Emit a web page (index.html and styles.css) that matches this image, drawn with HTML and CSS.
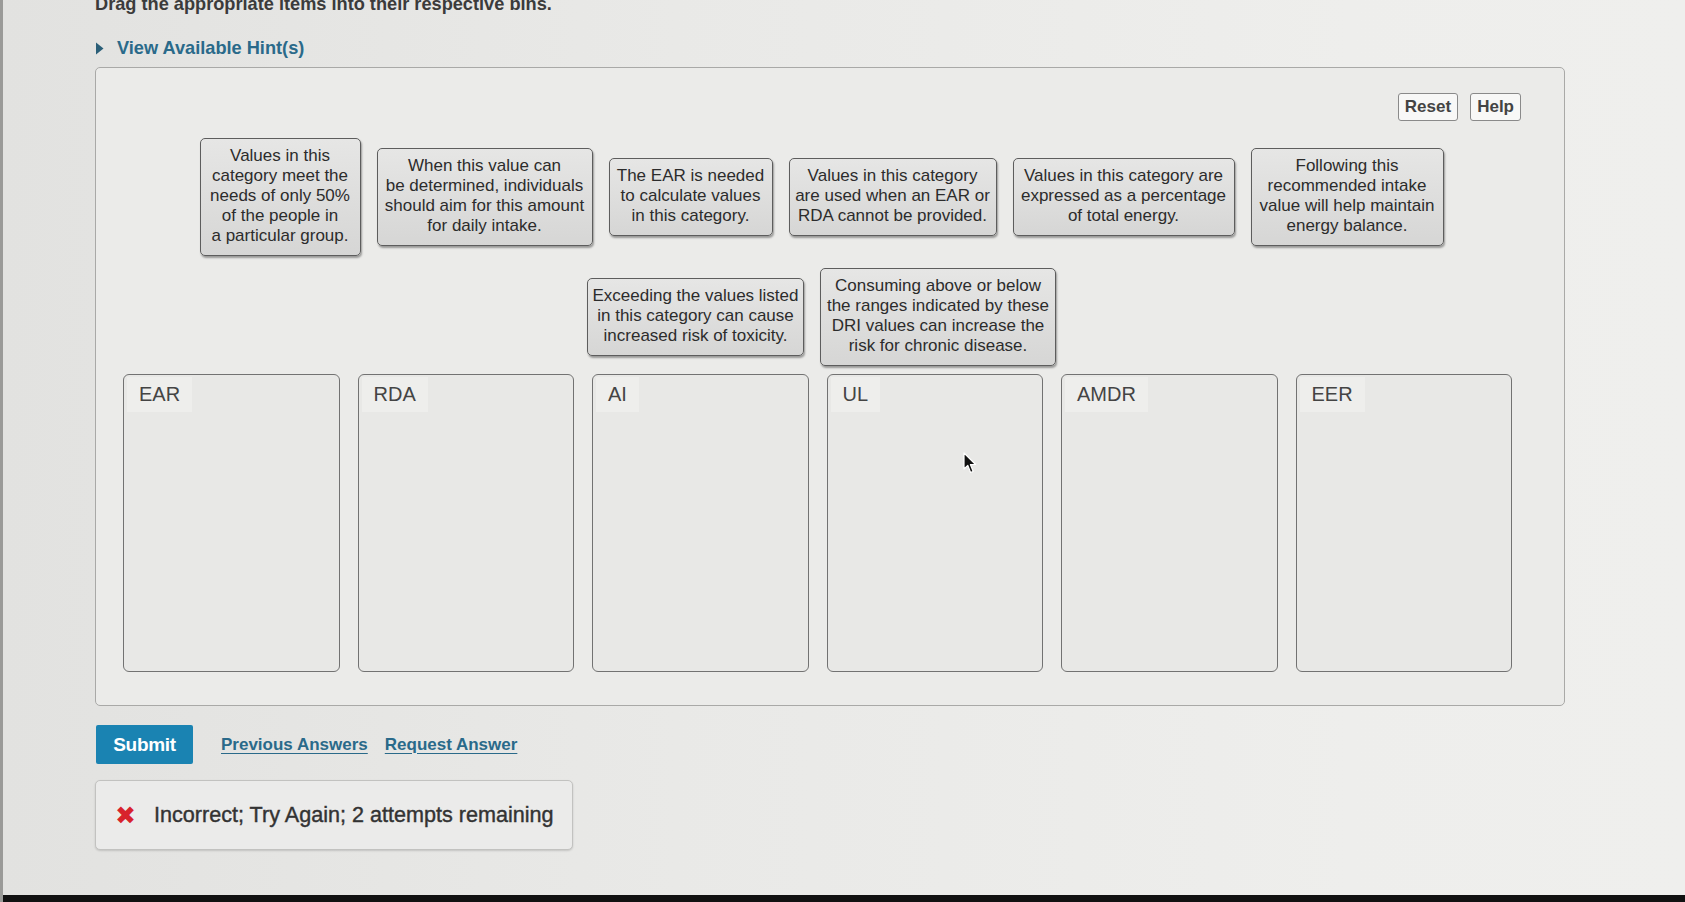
FILE: index.html
```html
<!DOCTYPE html>
<html lang="en">
<head>
<meta charset="utf-8">
<title>Drag the appropriate items into their respective bins</title>
<link rel="stylesheet" href="styles.css">
</head>
<body>
<div class="screen">
  <div class="content">
    <p class="instructions">Drag the appropriate items into their respective bins.</p>
    <div class="hint-row">
      <svg class="hint-arrow" width="9" height="13" viewBox="0 0 9 13"><path d="M1 0.5 L8.5 6.5 L1 12.5 Z" fill="#2b5f78"/></svg>
      <span class="hint-link">View Available Hint(s)</span>
    </div>

    <div class="panel">
      <div class="toolbar">
        <button class="tool-btn">Reset</button>
        <button class="tool-btn">Help</button>
      </div>

      <div class="cards">
        <div class="card c1">Values in this<br>category meet the<br>needs of only 50%<br>of the people in<br>a particular group.</div>
        <div class="card c2">When this value can<br>be determined, individuals<br>should aim for this amount<br>for daily intake.</div>
        <div class="card c3">The EAR is needed<br>to calculate values<br>in this category.</div>
        <div class="card c4">Values in this category<br>are used when an EAR or<br>RDA cannot be provided.</div>
        <div class="card c5">Values in this category are<br>expressed as a percentage<br>of total energy.</div>
        <div class="card c6">Following this<br>recommended intake<br>value will help maintain<br>energy balance.</div>
        <div class="card c7">Exceeding the values listed<br>in this category can cause<br>increased risk of toxicity.</div>
        <div class="card c8">Consuming above or below<br>the ranges indicated by these<br>DRI values can increase the<br>risk for chronic disease.</div>
      </div>

      <div class="bins">
        <div class="bin"><span class="bin-label">EAR</span></div>
        <div class="bin"><span class="bin-label">RDA</span></div>
        <div class="bin"><span class="bin-label">AI</span></div>
        <div class="bin"><span class="bin-label">UL</span></div>
        <div class="bin"><span class="bin-label">AMDR</span></div>
        <div class="bin"><span class="bin-label">EER</span></div>
      </div>
    </div>

    <div class="actions">
      <button class="submit">Submit</button>
      <a class="action-link" href="#">Previous Answers</a>
      <a class="action-link" href="#">Request Answer</a>
    </div>

    <div class="feedback">
      <span class="feedback-x">&#10006;</span>
      <span class="feedback-text">Incorrect; Try Again; 2 attempts remaining</span>
    </div>
  </div>
  <div class="bezel"></div>

  <svg class="cursor" width="14" height="23" viewBox="0 0 14 23">
    <path d="M1 1 L1 17 L4.8 13.4 L7.6 20.5 L10.2 19.4 L7.4 12.5 L12.6 12.5 Z" fill="#111" stroke="#fff" stroke-width="1.2" stroke-linejoin="round"/>
  </svg>
</div>
</body>
</html>
```

FILE: styles.css
```css
* { box-sizing: border-box; }

html, body {
  margin: 0;
  padding: 0;
  height: 100%;
}

body {
  font-family: "Liberation Sans", Arial, Helvetica, sans-serif;
  color: #333;
  background: #e7e7e5;
  overflow: hidden;
}

.screen {
  position: relative;
  height: 902px;
  display: flex;
  flex-direction: column;
  background: linear-gradient(to right, #e2e2e0 0%, #e9e9e7 40%, #eeeeec 80%, #efefed 100%);
  border-left: 3px solid #9a9a98;
}

.content {
  flex: 1;
  padding-left: 92px;
}

.instructions {
  margin: -6px 0 0 0;
  font-size: 18.2px;
  line-height: 20px;
  font-weight: bold;
  color: #3b3b3b;
}

.hint-row {
  display: flex;
  align-items: center;
  height: 22px;
  margin-top: 23px;
}

.hint-arrow {
  margin-right: 13px;
}

.hint-link {
  font-size: 18.2px;
  font-weight: bold;
  color: #2a6a8a;
}

.panel {
  margin-top: 8px;
  width: 1470px;
  border: 1.5px solid #a9a9a7;
  border-radius: 5px;
  background: #ebebe9;
  padding: 25px 52px 33px 27px;
}

.toolbar {
  display: flex;
  justify-content: flex-end;
  gap: 12px;
  margin-right: -9px;
}

.tool-btn {
  height: 28px;
  padding: 0 6px;
  border: 1px solid #8a8a8a;
  border-radius: 3px;
  background: #f8f8f7;
  font-family: inherit;
  font-size: 17px;
  font-weight: bold;
  color: #444;
}

.cards {
  display: flex;
  flex-wrap: wrap;
  justify-content: center;
  align-items: center;
  column-gap: 16px;
  row-gap: 12px;
  margin-top: 17px;
  padding-left: 8px;
}

.card {
  border: 1.5px solid #5d5d5d;
  border-radius: 5px;
  background: linear-gradient(to bottom, #e6e6e5, #d6d6d5);
  box-shadow: 1px 2px 2px rgba(0, 0, 0, 0.35);
  padding: 7px 2px 9px;
  text-align: center;
  white-space: nowrap;
  font-size: 17px;
  line-height: 20px;
  color: #2c2c2c;
}

.c1 { width: 161px; }
.c2 { width: 216px; }
.c3 { width: 164px; }
.c4 { width: 208px; }
.c5 { width: 222px; }
.c6 { width: 193px; }
.c7 { width: 217px; }
.c8 { width: 236px; }

.bins {
  display: flex;
  gap: 18px;
  margin-top: 8px;
}

.bin {
  width: 217px;
  height: 298px;
  border: 1.5px solid #727272;
  border-radius: 6px;
  background: #e8e8e6;
}

.bin-label {
  display: inline-block;
  margin: 2px 0 0 3px;
  padding: 5px 12px 6px 12px;
  background: #eeeeec;
  font-size: 20px;
  line-height: 24px;
  color: #444;
}

.actions {
  display: flex;
  align-items: center;
  margin-top: 19px;
  padding-left: 1px;
}

.submit {
  width: 97px;
  height: 39px;
  border: none;
  border-radius: 2px;
  background: #1a83b2;
  color: #fff;
  font-family: inherit;
  font-size: 19px;
  font-weight: bold;
  letter-spacing: -0.3px;
}

.action-link {
  margin-left: 28px;
  font-size: 17px;
  font-weight: bold;
  color: #2a6a8a;
  text-decoration: underline;
  text-underline-offset: 3px;
}

.action-link + .action-link {
  margin-left: 17px;
}

.feedback {
  display: flex;
  align-items: center;
  margin-top: 16px;
  width: 478px;
  height: 70px;
  border: 1px solid #c2c2c0;
  border-radius: 5px;
  background: #ebebea;
  box-shadow: 0 1px 2px rgba(0, 0, 0, 0.15);
  padding-left: 19px;
}

.feedback-x {
  color: #d8222c;
  font-size: 25px;
  line-height: 1;
  margin-right: 18px;
  font-family: "DejaVu Sans", sans-serif;
}

.feedback-text {
  font-size: 21.6px;
  color: #333;
  -webkit-text-stroke: 0.4px #333;
}

.bezel {
  height: 7px;
  background: #111;
}

.cursor {
  position: absolute;
  left: 960px;
  top: 452px;
}
```
